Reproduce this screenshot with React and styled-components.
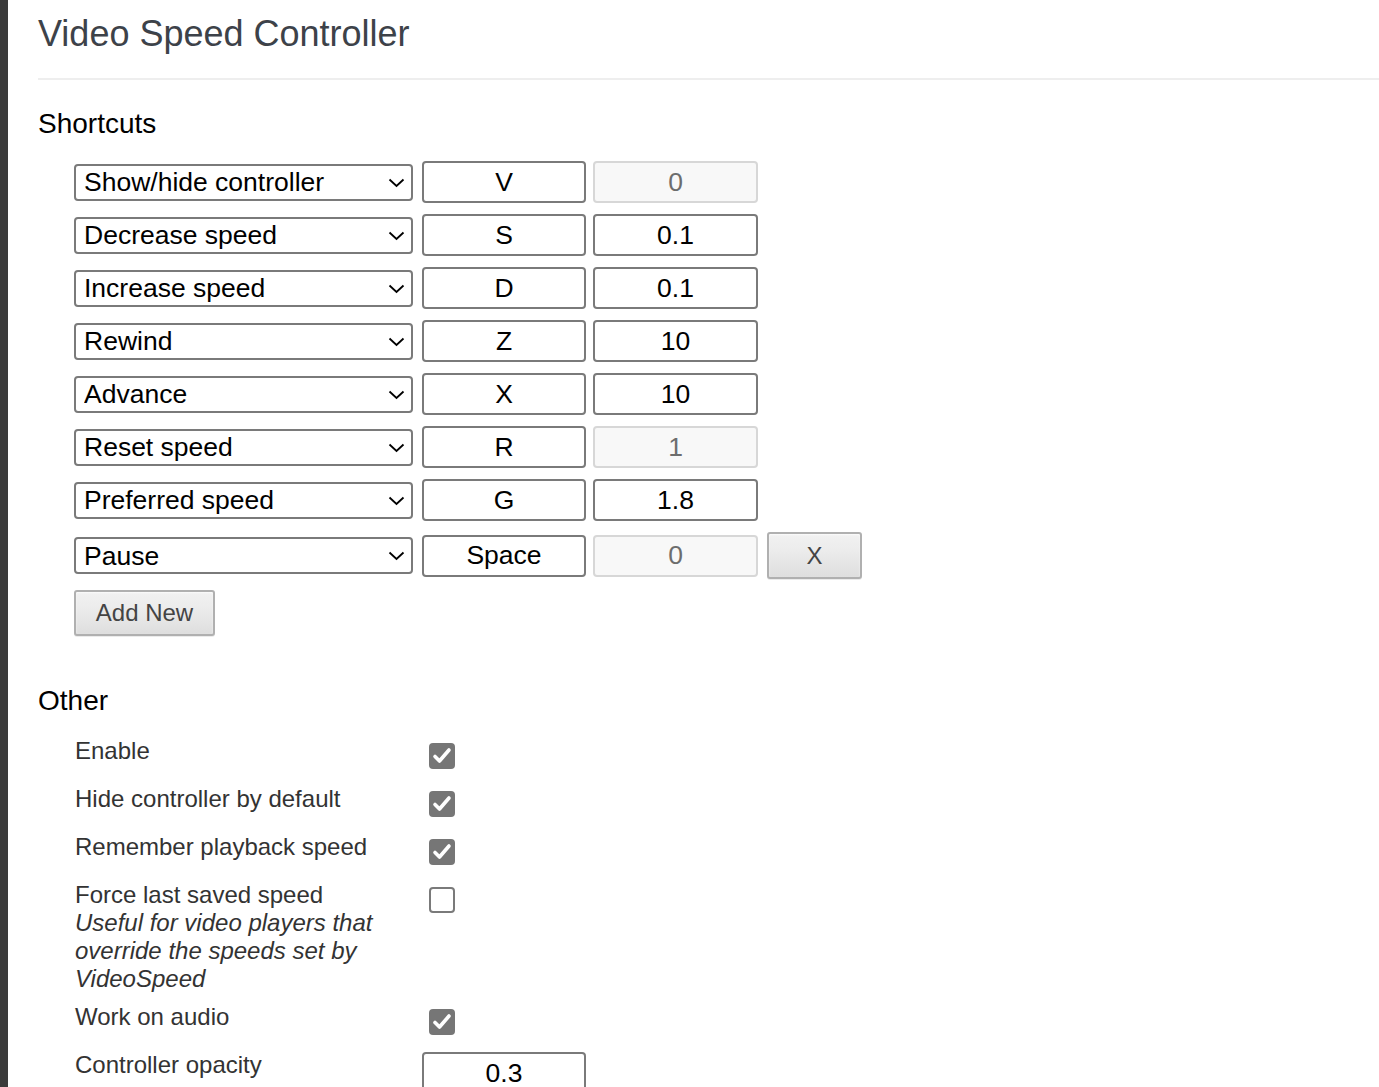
import React from 'react';
import styled, { createGlobalStyle } from 'styled-components';

const GlobalStyle = createGlobalStyle`
    html, body {
        margin: 0;
        padding: 0;
        background: #fff;
    }
    body {
        font-family: "Liberation Sans", Arial, Helvetica, sans-serif;
    }
    * {
        box-sizing: border-box;
    }
`;

const Page = styled.div`
    display: flex;
    min-height: 100vh;
`;

const SideBar = styled.div`
    width: 8px;
    flex-shrink: 0;
    background: #3b3b3b;
`;

const Main = styled.main`
    flex: 1;
    padding: 12px 0 40px 30px;
`;

const Header = styled.header`
    padding-bottom: 22px;
    border-bottom: 2px solid #eeeeee;
`;

const Title = styled.h1`
    margin: 0;
    font-size: 36px;
    line-height: 44px;
    font-weight: normal;
    color: #3d4249;
`;

const SectionTitle = styled.h2`
    margin: ${props => props.$top}px 0 0;
    font-size: 28px;
    line-height: 32px;
    font-weight: normal;
    color: #000;
`;

const ShortcutList = styled.section`
    margin-top: 21px;
    padding-left: 36px;
`;

const ShortcutRow = styled.div`
    display: flex;
    align-items: center;
    min-height: 42px;
    margin-bottom: 11px;
`;

const SelectWrap = styled.div`
    position: relative;
    width: 339px;
    height: 37px;
    margin-right: 9px;
`;

const Select = styled.select`
    appearance: none;
    width: 100%;
    height: 100%;
    padding: 0 30px 0 8px;
    border: 2px solid #7a7a7a;
    border-radius: 4px;
    background: #fff;
    font-family: inherit;
    font-size: 26.5px;
    color: #000;
    outline: none;
`;

const Chevron = styled.svg`
    position: absolute;
    right: 8px;
    top: 14px;
    pointer-events: none;
`;

const TextInput = styled.input`
    width: ${props => props.$width || 164}px;
    height: 42px;
    margin: ${props => props.$margin || '0'};
    padding: 0 4px;
    border: 2px solid ${props => props.disabled ? '#d7d7d7' : '#7a7a7a'};
    border-radius: 4px;
    background: ${props => props.disabled ? '#f8f8f8' : '#fff'};
    color: ${props => props.disabled ? '#6d6d6d' : '#000'};
    font-family: inherit;
    font-size: 26.5px;
    text-align: center;
    outline: none;
`;

const Button = styled.button`
    width: ${props => props.$width}px;
    height: ${props => props.$height}px;
    margin-left: ${props => props.$left || 0}px;
    padding: 0;
    border: 2px solid #b0b0b0;
    border-radius: 3px;
    background-image: linear-gradient(#f1f1f1, #ececec 38%, #dedede);
    box-shadow: 0 1px 0 rgba(0, 0, 0, 0.08), inset 0 1px 2px rgba(255, 255, 255, 0.75);
    color: #444;
    font-family: inherit;
    font-size: 24px;
    cursor: pointer;
`;

const OptionList = styled.section`
    margin-top: 20px;
    padding-left: 37px;
`;

const OptionRow = styled.div`
    display: flex;
    align-items: flex-start;
    margin-bottom: 10px;
`;

const Label = styled.label`
    width: 347px;
    flex-shrink: 0;
    padding-right: 20px;
    font-size: 24px;
    line-height: 28px;
    color: #333;
`;

const Hint = styled.em`
    display: block;
`;

const CheckBox = styled.span`
    display: flex;
    align-items: center;
    justify-content: center;
    width: 26px;
    height: 26px;
    margin: 6px 0 6px 7px;
    border-radius: 4px;
    border: ${props => props.$checked ? 'none' : '2px solid #7a7a7a'};
    background: ${props => props.$checked ? '#767676' : '#fff'};
`;

const OpacityInput = styled(TextInput)`
    margin-top: 1px;
`;

const shortcuts = [
    { action: 'Show/hide controller', key: 'V', value: '0', fixed: true },
    { action: 'Decrease speed', key: 'S', value: '0.1' },
    { action: 'Increase speed', key: 'D', value: '0.1' },
    { action: 'Rewind', key: 'Z', value: '10' },
    { action: 'Advance', key: 'X', value: '10' },
    { action: 'Reset speed', key: 'R', value: '1', fixed: true },
    { action: 'Preferred speed', key: 'G', value: '1.8' },
    { action: 'Pause', key: 'Space', value: '0', fixed: true, removable: true },
];

const actions = [
    'Show/hide controller',
    'Decrease speed',
    'Increase speed',
    'Rewind',
    'Advance',
    'Reset speed',
    'Preferred speed',
    'Pause',
];

const options = [
    { label: 'Enable', checked: true },
    { label: 'Hide controller by default', checked: true },
    { label: 'Remember playback speed', checked: true },
    {
        label: 'Force last saved speed',
        hint: 'Useful for video players that override the speeds set by VideoSpeed',
        checked: false,
    },
    { label: 'Work on audio', checked: true },
];

const Check = ({ checked }) => (
    <CheckBox $checked={checked}>
        {checked && (
            <svg width="20" height="20" viewBox="0 0 20 20">
                <polyline
                    points="3,10.5 7.5,15 17,4"
                    fill="none"
                    stroke="#fff"
                    strokeWidth="3.6"
                    strokeLinecap="round"
                    strokeLinejoin="round"
                />
            </svg>
        )}
    </CheckBox>
);

const ActionSelect = ({ value }) => (
    <SelectWrap>
        <Select defaultValue={value}>
            {actions.map(a => (
                <option key={a} value={a}>{a}</option>
            ))}
        </Select>
        <Chevron width="17" height="10" viewBox="0 0 17 10">
            <polyline points="1.5,1.5 8.5,8 15.5,1.5" fill="none" stroke="#000" strokeWidth="1.8" />
        </Chevron>
    </SelectWrap>
);

const App = () => (
    <>
        <GlobalStyle />
        <Page>
            <SideBar />
            <Main>
                <Header>
                    <Title>Video Speed Controller</Title>
                </Header>

                <SectionTitle $top={28}>Shortcuts</SectionTitle>
                <ShortcutList>
                    {shortcuts.map(s => (
                        <ShortcutRow key={s.action}>
                            <ActionSelect value={s.action} />
                            <TextInput defaultValue={s.key} $margin="0 7px 0 0" readOnly />
                            <TextInput defaultValue={s.value} $width={165} disabled={s.fixed} />
                            {s.removable && (
                                <Button $width={95} $height={47} $left={9}>X</Button>
                            )}
                        </ShortcutRow>
                    ))}
                    <Button $width={141} $height={46}>Add New</Button>
                </ShortcutList>

                <SectionTitle $top={49}>Other</SectionTitle>
                <OptionList>
                    {options.map(o => (
                        <OptionRow key={o.label}>
                            <Label>
                                {o.label}
                                {o.hint && <Hint>{o.hint}</Hint>}
                            </Label>
                            <Check checked={o.checked} />
                        </OptionRow>
                    ))}
                    <OptionRow>
                        <Label>Controller opacity</Label>
                        <OpacityInput defaultValue="0.3" />
                    </OptionRow>
                </OptionList>
            </Main>
        </Page>
    </>
);

export default App;
